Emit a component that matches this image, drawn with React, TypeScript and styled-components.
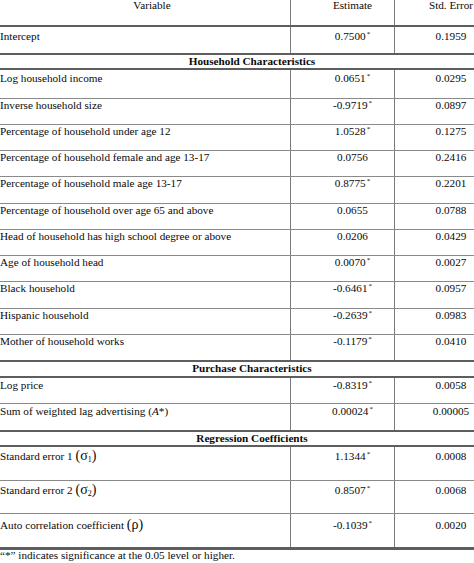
import React from "react";
import styled, { createGlobalStyle } from "styled-components";

const Global = createGlobalStyle`
  html, body { margin: 0; padding: 0; background: #fff; overflow: hidden; }
  body { font-family: "Liberation Serif", "Times New Roman", serif; color: #0a0a0a; }
`;

type Rule = "thin" | "thick" | "heavy";

const ruleCss = (r: Rule) =>
  r === "thin" ? "1px solid #8a8a8a" : r === "thick" ? "2px solid #5e5e5e" : "3px solid #5e5e5e";

const Table = styled.div`
  width: 510px;
  margin: -3px 0 0 -3px;
  font-size: 11.2px;
`;

const Row = styled.div<{ $h: number; $rule: Rule }>`
  display: grid;
  grid-template-columns: 293px 104px 1fr;
  height: ${(p) => p.$h}px;
  border-bottom: ${(p) => ruleCss(p.$rule)};
`;

const Cell = styled.div<{ $align?: "left" | "center"; $padL?: number; $padT?: number; $divider?: boolean }>`
  padding: ${(p) => p.$padT ?? 0}px 0 0 ${(p) => p.$padL ?? 0}px;
  line-height: 13px;
  text-align: ${(p) => p.$align ?? "left"};
  border-left: ${(p) => (p.$divider ? "1px solid #7a7a7a" : "none")};
  white-space: nowrap;
  overflow: visible;
`;

const SectionTitle = styled.div`
  grid-column: 1 / -1;
  text-align: center;
  font-weight: bold;
  line-height: 13px;
  white-space: nowrap;
`;

const Star = styled.span`
  font-size: 7px;
  position: relative;
  top: -4px;
  margin-left: 1px;
  line-height: 0;
`;

const Sym = styled.span`
  font-size: 14px;
  line-height: 0;
`;

const Sub = styled.span`
  font-size: 8px;
  position: relative;
  top: 2px;
  line-height: 0;
`;

const Ital = styled.span`
  font-style: italic;
`;

const Footnote = styled.div`
  font-size: 11.2px;
  line-height: 11px;
  padding-left: 3px;
  white-space: nowrap;
`;

type DataRow = {
  label: React.ReactNode;
  est: string;
  star: boolean;
  se: string;
  h: number;
  rule: Rule;
  padT?: number;
};

type Block =
  | { kind: "section"; title: string; h: number }
  | { kind: "rows"; rows: DataRow[] };

const r = 25.25;

const blocks: Block[] = [
  {
    kind: "rows",
    rows: [{ label: "Intercept", est: "0.7500", star: true, se: "0.1959", h: 26, rule: "thick", padT: 3 }],
  },
  { kind: "section", title: "Household Characteristics", h: 13 },
  {
    kind: "rows",
    rows: [
      { label: "Log household income", est: "0.0651", star: true, se: "0.0295", h: 27.5, rule: "thin", padT: 2 },
      { label: "Inverse household size", est: "-0.9719", star: true, se: "0.0897", h: r, rule: "thin" },
      { label: "Percentage of household under age 12", est: "1.0528", star: true, se: "0.1275", h: r, rule: "thin" },
      { label: "Percentage of household female and age 13-17", est: "0.0756", star: false, se: "0.2416", h: r, rule: "thin" },
      { label: "Percentage of household male age 13-17", est: "0.8775", star: true, se: "0.2201", h: r, rule: "thin" },
      { label: "Percentage of household over age 65 and above", est: "0.0655", star: false, se: "0.0788", h: r, rule: "thin" },
      { label: "Head of household has high school degree or above", est: "0.0206", star: false, se: "0.0429", h: r, rule: "thin" },
      { label: "Age of household head", est: "0.0070", star: true, se: "0.0027", h: r, rule: "thin" },
      { label: "Black household", est: "-0.6461", star: true, se: "0.0957", h: r, rule: "thin" },
      { label: "Hispanic household", est: "-0.2639", star: true, se: "0.0983", h: r, rule: "thin" },
      { label: "Mother of household works", est: "-0.1179", star: true, se: "0.0410", h: r, rule: "thick" },
    ],
  },
  { kind: "section", title: "Purchase Characteristics", h: 14 },
  {
    kind: "rows",
    rows: [
      { label: "Log price", est: "-0.8319", star: true, se: "0.0058", h: 25, rule: "thin", padT: 1 },
      {
        label: (
          <>
            Sum of weighted lag advertising (<Ital>A</Ital>*)
          </>
        ),
        est: "0.00024",
        star: true,
        se: "0.00005",
        h: 26,
        rule: "thick",
        padT: 1,
      },
    ],
  },
  { kind: "section", title: "Regression Coefficients", h: 13 },
  {
    kind: "rows",
    rows: [
      {
        label: (
          <>
            Standard error 1 <Sym>(σ</Sym>
            <Sub>1</Sub>
            <Sym>)</Sym>
          </>
        ),
        est: "1.1344",
        star: true,
        se: "0.0008",
        h: 33,
        rule: "thin",
        padT: 3,
      },
      {
        label: (
          <>
            Standard error 2 <Sym>(σ</Sym>
            <Sub>2</Sub>
            <Sym>)</Sym>
          </>
        ),
        est: "0.8507",
        star: true,
        se: "0.0068",
        h: 32,
        rule: "thin",
        padT: 3,
      },
      {
        label: (
          <>
            Auto correlation coefficient <Sym>(ρ)</Sym>
          </>
        ),
        est: "-0.1039",
        star: true,
        se: "0.0020",
        h: 33,
        rule: "heavy",
        padT: 5,
      },
    ],
  },
];

export default function App() {
  return (
    <>
      <Global />
      <Table>
        <Row $h={28} $rule="thick">
          <Cell $align="center" $padL={17} $padT={2}>
            Variable
          </Cell>
          <Cell $align="center" $padL={20} $padT={2} $divider>
            Estimate
          </Cell>
          <Cell $align="center" $padT={2} $divider>
            Std. Error
          </Cell>
        </Row>
        {blocks.map((b, i) =>
          b.kind === "section" ? (
            <Row key={i} $h={b.h} $rule="thick">
              <SectionTitle>{b.title}</SectionTitle>
            </Row>
          ) : (
            b.rows.map((row, j) => (
              <Row key={`${i}-${j}`} $h={row.h} $rule={row.rule}>
                <Cell $padL={3} $padT={row.padT}>
                  {row.label}
                </Cell>
                <Cell $align="center" $padL={20} $padT={row.padT} $divider>
                  {row.est}
                  {row.star && <Star>*</Star>}
                </Cell>
                <Cell $align="center" $padT={row.padT} $divider>
                  {row.se}
                </Cell>
              </Row>
            ))
          )
        )}
        <Footnote>“*” indicates significance at the 0.05 level or higher.</Footnote>
      </Table>
    </>
  );
}
